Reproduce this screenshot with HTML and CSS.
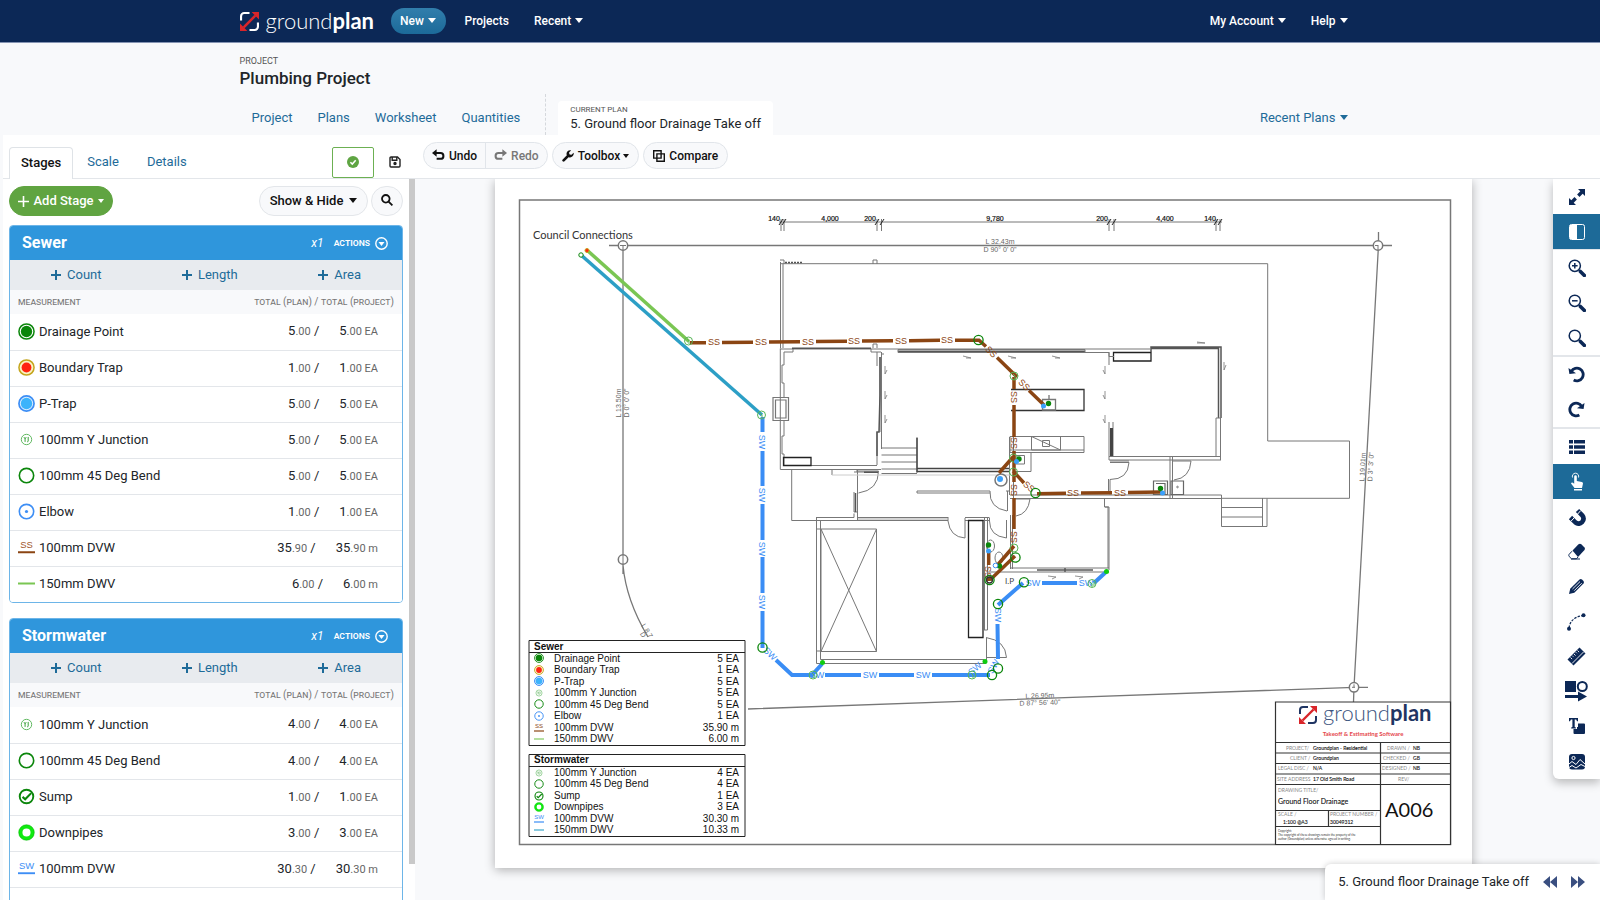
FILE: index.html
```html
<!DOCTYPE html>
<html lang="en">
<head>
<meta charset="utf-8">
<title>Plumbing Project - groundplan</title>
<link rel="stylesheet" href="styles.css">
</head>
<body>
<svg class="defs" width="0" height="0" aria-hidden="true">
  <symbol id="logo" viewBox="0 0 18 18">
    <path d="M1 8V4a3 3 0 0 1 3-3h5M17 10v4a3 3 0 0 1-3 3H9" fill="none" stroke="currentColor" stroke-width="2"/>
    <path d="M3.5 14.5l11-11" stroke="#d9252a" stroke-width="2.4"/>
    <path d="M11 0h7v7zM0 11v7h7z" fill="#d9252a"/>
  </symbol>
  <symbol id="m-drain" viewBox="0 0 18 18"><circle cx="9" cy="9" r="8" fill="#fff" stroke="#0b860b" stroke-width="1.6"/><circle cx="9" cy="9" r="6" fill="#0b860b"/></symbol>
  <symbol id="m-trap" viewBox="0 0 18 18"><circle cx="9" cy="9" r="8" fill="#fbf3c4" stroke="#c4a51c" stroke-width="1.6"/><circle cx="9" cy="9" r="5.2" fill="#f21"/></symbol>
  <symbol id="m-ptrap" viewBox="0 0 18 18"><circle cx="9" cy="9" r="8" fill="#d5ecff" stroke="#3d8ef5" stroke-width="1.8"/><circle cx="9" cy="9" r="6" fill="#3cb3fb"/></symbol>
  <symbol id="m-yj" viewBox="0 0 18 18"><circle cx="9" cy="9" r="5.5" fill="#fff" stroke="#58b558" stroke-width="1"/><path d="M6.3 6.5l1.2 1.8 1.2-1.8M7.5 8.3v3.2M10.8 6.3v4.2q0 1-1 1" fill="none" stroke="#2f9c2f" stroke-width="1"/></symbol>
  <symbol id="m-bend" viewBox="0 0 18 18"><circle cx="9" cy="9" r="7.6" fill="#fff" stroke="#0b860b" stroke-width="1.7"/></symbol>
  <symbol id="m-elbow" viewBox="0 0 18 18"><circle cx="9" cy="9" r="7.6" fill="#fff" stroke="#3d8ef5" stroke-width="1.7"/><circle cx="9" cy="9" r="1.7" fill="#3d8ef5"/></symbol>
  <symbol id="m-sump" viewBox="0 0 18 18"><circle cx="9" cy="9" r="7.2" fill="#fff" stroke="#0b860b" stroke-width="2"/><path d="M4.8 9.4l2.8 2.6 6.4-6.6" fill="none" stroke="#0b860b" stroke-width="2.2"/></symbol>
  <symbol id="m-down" viewBox="0 0 18 18"><circle cx="9" cy="9" r="6.3" fill="#fff" stroke="#10ea10" stroke-width="4"/><circle cx="9" cy="9" r="8.2" fill="none" stroke="#0bb80b" stroke-width=".6"/></symbol>
  <symbol id="m-green" viewBox="0 0 18 18"><path d="M0 9h18" stroke="#7ac653" stroke-width="2"/></symbol>
  <symbol id="m-teal" viewBox="0 0 18 18"><path d="M0 9h18" stroke="#2c9fc6" stroke-width="2"/></symbol>
  <symbol id="undo" viewBox="0 0 18 18"><path d="M3.6 5.6A6.7 6.7 0 1 1 6 14.8" fill="none" stroke="currentColor" stroke-width="3"/><path d="M.5 2l1 6.6 7-.8z" fill="currentColor"/></symbol>
  <symbol id="back" viewBox="0 0 14 14"><path d="M4 4.4h5.2a3 3 0 0 1 0 6.2H5" fill="none" stroke="currentColor" stroke-width="2.2"/><path d="M0 4.4L5 .4v8z" fill="currentColor"/></symbol>
  <symbol id="glass" viewBox="0 0 18 18"><circle cx="6.8" cy="6.8" r="5.6" fill="none" stroke="currentColor" stroke-width="1.5"/><path d="M11 11l1.6 1.6" stroke="currentColor" stroke-width="1.5"/><path d="M12.4 12.4l4 4" stroke="currentColor" stroke-width="3.6" stroke-linecap="round"/></symbol>
  <symbol id="ff" viewBox="0 0 14 12"><path d="M0 0l7 6-7 6zM7 0l7 6-7 6z" fill="currentColor"/></symbol>
</svg>

<header class="topbar">
  <div class="wrap">
    <a class="brand" href="#" aria-label="groundplan"><svg width="19" height="19"><use href="#logo"/></svg><span>ground<b>plan</b></span></a>
    <button class="new">New<i class="caret"></i></button>
    <a class="toplink" href="#">Projects</a>
    <a class="toplink" href="#">Recent<i class="caret"></i></a>
    <a class="toplink push" href="#">My Account<i class="caret"></i></a>
    <a class="toplink last" href="#">Help<i class="caret"></i></a>
  </div>
</header>

<section class="project">
  <div class="wrap-col">
    <p class="eyebrow">PROJECT</p>
    <h1>Plumbing Project</h1>
    <nav class="subnav">
      <a href="#">Project</a><a href="#">Plans</a><a href="#">Worksheet</a><a href="#">Quantities</a>
      <div class="divider"></div>
      <div class="current"><small>CURRENT PLAN</small><span>5. Ground floor Drainage Take off</span></div>
      <a class="recent" href="#">Recent Plans<i class="caret"></i></a>
    </nav>
  </div>
</section>

<div class="bar">
  <div class="tabs">
    <button class="tab on">Stages</button>
    <button class="tab">Scale</button>
    <button class="tab">Details</button>
    <button class="ok" aria-label="Saved"><svg width="12" height="12" viewBox="0 0 12 12"><circle cx="6" cy="6" r="6" fill="#5fa543"/><path d="M3.4 6.2l1.9 1.9 3.4-3.8" fill="none" stroke="#fff" stroke-width="1.5"/></svg></button>
    <button class="save" aria-label="Save"><svg width="12" height="12" viewBox="0 0 12 12" fill="none" stroke="#222" stroke-width="1.4"><path d="M1 2a1 1 0 0 1 1-1h6.500L11 3.500V10a1 1 0 0 1-1 1H2a1 1 0 0 1-1-1z"/><path d="M3.200 1v3.200h4.600V1"/><circle cx="6" cy="7.500" r="1" fill="#222"/></svg></button>
  </div>
  <div class="tools">
    <div class="group">
      <button><svg width="13" height="13"><use href="#back"/></svg>Undo</button>
      <button class="off"><svg width="13" height="13" class="flip"><use href="#back"/></svg>Redo</button>
    </div>
    <button class="pill"><svg width="12" height="12" viewBox="0 0 12 12"><path d="M1.600 10.400L6.500 5.500" stroke="#111" stroke-width="2.600" stroke-linecap="round"/><path d="M11.600 2.700L9.500 4.800 7.400 4.400 7.100 2.400 9.200.300A3.700 3.700 0 0 0 4.700 5l2.200 2.200a3.700 3.700 0 0 0 4.700-4.500z" fill="#111"/></svg>Toolbox<i class="caret sm"></i></button>
    <button class="pill"><svg width="12" height="12" viewBox="0 0 12 12" fill="none" stroke="#111" stroke-width="1.400"><path d="M.700.700h7.400v7.400H.700zM3.900 3.900h7.400v7.400H3.900z"/></svg>Compare</button>
  </div>
</div>

<main class="work">
  <aside class="side">
    <div class="stages">
      <div class="controls">
        <button class="add"><svg width="11" height="11" viewBox="0 0 11 11"><path d="M5.500 0v11M0 5.500h11" stroke="#fff" stroke-width="1.600"/></svg>Add Stage<i class="caret sm"></i></button>
        <button class="show">Show &amp; Hide<i class="caret"></i></button>
        <button class="find" aria-label="Search"><svg width="12" height="12" viewBox="0 0 12 12" fill="none" stroke="#111" stroke-width="1.800"><circle cx="4.800" cy="4.800" r="3.800"/><path d="M7.600 7.600l3.800 3.800"/></svg></button>
      </div>

      <section class="panel">
        <header><h2>Sewer</h2><em>x1</em><button>actions<svg width="13" height="13" viewBox="0 0 13 13"><circle cx="6.500" cy="6.500" r="5.700" fill="none" stroke="#fff" stroke-width="1.400"/><path d="M3.500 5h6l-3 4z" fill="#fff"/></svg></button></header>
        <div class="adders"><button><i class="plus"></i>Count</button><button><i class="plus"></i>Length</button><button><i class="plus"></i>Area</button></div>
        <table>
          <thead><tr><th>measurement</th><th>total (plan) / total (project)</th></tr></thead>
          <tbody>
            <tr><td><svg><use href="#m-drain"/></svg>Drainage Point</td><td>5<s>.00</s> /<b>5<s>.00 EA</s></b></td></tr>
            <tr><td><svg><use href="#m-trap"/></svg>Boundary Trap</td><td>1<s>.00</s> /<b>1<s>.00 EA</s></b></td></tr>
            <tr><td><svg><use href="#m-ptrap"/></svg>P-Trap</td><td>5<s>.00</s> /<b>5<s>.00 EA</s></b></td></tr>
            <tr><td><svg><use href="#m-yj"/></svg>100mm Y Junction</td><td>5<s>.00</s> /<b>5<s>.00 EA</s></b></td></tr>
            <tr><td><svg><use href="#m-bend"/></svg>100mm 45 Deg Bend</td><td>5<s>.00</s> /<b>5<s>.00 EA</s></b></td></tr>
            <tr><td><svg><use href="#m-elbow"/></svg>Elbow</td><td>1<s>.00</s> /<b>1<s>.00 EA</s></b></td></tr>
            <tr><td><svg viewBox="0 0 18 18"><text x="9" y="9" font-size="10" text-anchor="middle" fill="#a0562a" class="arial">SS</text><path d="M0 14h18" stroke="#8b4513" stroke-width="2"/></svg>100mm DVW</td><td>35<s>.90</s> /<b>35<s>.90 m</s></b></td></tr>
            <tr><td><svg><use href="#m-green"/></svg>150mm DWV</td><td>6<s>.00</s> /<b>6<s>.00 m</s></b></td></tr>
          </tbody>
        </table>
      </section>

      <section class="panel">
        <header><h2>Stormwater</h2><em>x1</em><button>actions<svg width="13" height="13" viewBox="0 0 13 13"><circle cx="6.500" cy="6.500" r="5.700" fill="none" stroke="#fff" stroke-width="1.400"/><path d="M3.500 5h6l-3 4z" fill="#fff"/></svg></button></header>
        <div class="adders"><button><i class="plus"></i>Count</button><button><i class="plus"></i>Length</button><button><i class="plus"></i>Area</button></div>
        <table>
          <thead><tr><th>measurement</th><th>total (plan) / total (project)</th></tr></thead>
          <tbody>
            <tr><td><svg><use href="#m-yj"/></svg>100mm Y Junction</td><td>4<s>.00</s> /<b>4<s>.00 EA</s></b></td></tr>
            <tr><td><svg><use href="#m-bend"/></svg>100mm 45 Deg Bend</td><td>4<s>.00</s> /<b>4<s>.00 EA</s></b></td></tr>
            <tr><td><svg><use href="#m-sump"/></svg>Sump</td><td>1<s>.00</s> /<b>1<s>.00 EA</s></b></td></tr>
            <tr><td><svg><use href="#m-down"/></svg>Downpipes</td><td>3<s>.00</s> /<b>3<s>.00 EA</s></b></td></tr>
            <tr><td><svg viewBox="0 0 18 18"><text x="9" y="9" font-size="10" text-anchor="middle" fill="#3d8ef5" class="arial">SW</text><path d="M0 14h18" stroke="#3d8ef5" stroke-width="2"/></svg>100mm DVW</td><td>30<s>.30</s> /<b>30<s>.30 m</s></b></td></tr>
            <tr><td></td><td></td></tr>
          </tbody>
        </table>
      </section>
    </div>
    <div class="thumb"></div>
  </aside>

  <div class="canvas">
    <svg class="sheet" viewBox="495 179 977 689" role="img" aria-label="Ground floor drainage plan">
      <rect x="519.500" y="200" width="931" height="644.500" fill="none" stroke="#777" stroke-width="1.500"/>

      <!-- dimension string -->
      <g stroke="#777" stroke-width="1" fill="none">
        <path d="M779 222H1222M781 219v12M784 219v12M877 219v12M881.500 219v12M1109 219v12M1114 219v12M1216 219v12M1220 219v12"/>
        <path stroke="#222" d="M779 225l4-6M782 225l4-6M875 225l4-6M880 225l4-6M1107 225l4-6M1112 225l4-6M1214 225l4-6M1218 225l4-6"/>
      </g>
      <g class="arial" font-size="7" fill="#111" stroke="#111" stroke-width=".2" text-anchor="middle">
        <text x="774" y="221">140</text><text x="830" y="221">4,000</text><text x="870" y="221">200</text><text x="995" y="221">9,780</text><text x="1102" y="221">200</text><text x="1165" y="221">4,400</text><text x="1210" y="221">140</text>
      </g>

      <!-- boundary -->
      <g stroke="#777" stroke-width="1.300" fill="none">
        <path d="M609 245.500H1392M623 245V574M623 565Q626 600 648 637M1378.500 232v13L1354 687l-.500 15M748 709L1354 687.300H1368"/>
        <g fill="#fff" stroke-width="1.500"><circle cx="623" cy="245.500" r="4.700"/><circle cx="1378" cy="245.500" r="4.700"/><circle cx="623" cy="559.500" r="4.700"/><circle cx="1354" cy="687.300" r="4.700"/></g>
        <path stroke-width="1" d="M623 245v5M1378 245v5M620 245.500h6M1375 245.500h3M623 555v9M1354 687.300v-3M1352 687.300h3"/>
      </g>
      <g class="arial" font-size="7" fill="#666" text-anchor="middle">
        <text x="1000" y="244">L 32.43m</text><text x="1000" y="252">D 90° 0' 0"</text>
        <text transform="translate(621 403) rotate(-90)">L 13.50m</text><text transform="translate(629 403) rotate(-90)">D 0° 0' 0"</text>
        <text transform="translate(1365 467) rotate(-87)">L 19.01m</text><text transform="translate(1373 467) rotate(-87)">D 3° 3' 0"</text>
        <text transform="translate(1040 698) rotate(-2)">L 26.95m</text><text transform="translate(1040 705) rotate(-2)">D 87° 56' 40"</text>
        <text transform="translate(645 632) rotate(58)">L 8.7</text><text transform="translate(641 636) rotate(58)">D</text>
      </g>
      <text class="lato" x="533" y="239" font-size="11" fill="#333">Council Connections</text>

      <!-- walls -->
      <g stroke="#777" stroke-width="1" fill="none">
        <path d="M780.500 262V348M783 264V348M780 263.700H1267.700V441H1349.500V498.300H1221M780 260h4v4M873 264v-4h4v4M873 348v-4h4v4"/>
        <path stroke="#555" d="M785 262.500h17" stroke-width="1.500" stroke-dasharray="2 1"/>
        <path d="M780.300 348.500V469.500H881M784 352V365h-2v18h2v14M784 420v16h-2v18h2v12M784 352h9M780 349H1150M793 352v-3M871 349v3h10M877 352v14M880 357v75M784 465.500H877M877 432v33M881.500 352v97"/>
        <path stroke="#555" stroke-width="1.500" d="M792 348.300H871M880 357v38l-1 37h-2v24M898 351.200H1085"/>
        <path d="M773 397.500h15.500V420.500H773zM775.500 400h10.500v18H775.500z" stroke-width="1.200"/>
        <path stroke="#222" stroke-width="1.300" d="M783.500 457.500H811V465.500H783.500zM1113.500 352.500H1151V361H1113.500z"/>
        <path d="M898 349.500H1085v3H898zM881 354h3M1085 352.500h24v4h5M1109 352v13"/>
        <path stroke="#555" stroke-width="1.500" d="M1151 352v-5H1221V418M1151 348.500H1218.500V418"/>
        <path d="M1216 418h5M1216 418v39M1220.500 418V460M1109 456.500H1220M1109 460H1221M1109 422v38M1113 422v35M1170 457V498M1172.500 457V498"/>
        <path stroke="#444" stroke-width="3" d="M1111.500 428V456"/>
        <path d="M881.500 448H917M881.500 455H917M881.500 462H917M881.500 469H917M881.500 473.500H917M917 438V473"/>
        <path stroke="#444" stroke-width="1.400" d="M917 437.500V471.500H1010M917 468.500H1010"/>
        <path stroke="#333" stroke-width="1.300" d="M1011 389.500H1084V410.500H1011"/>
        <path d="M1042.500 399.500H1055.500V410H1042.500zM1049 395v5" stroke-width="1.300"/>
        <path d="M1010 436.500H1084V452.500H1010zM1010 450H1084M1031.500 436.500V450H1060.500V436.500M1031.500 436.500L1060.500 450M1042.500 440.500h7v6h-7zM1031 452.500V471.500H1013M1016 455.500H1024.500V464H1016z"/>
        <path d="M1009.500 437V495M1013.500 437V520M1010 495H1221.500M1010 498.500H1221M1221.500 495V526.500H1267V498.500M1262.500 498V526M1221 507.500h41M1221 517h41"/>
        <path d="M917 491H990M917 493H990M917 491v2M990 491q-1 17 17 20M1007.500 491v20M1006 491h4"/>
        <path d="M1110 461h19M1110 462.500h19q-1 17-19 17v15M1108.500 479v15M1172 461h19q-1 17-17 19"/>
        <path stroke="#666" stroke-width="1.200" d="M1153.500 481H1167.500V494.500H1153.500zM1156 483.500h9v11M1171 481H1183.500V494.500H1171z"/>
        <circle cx="1177.500" cy="487" r=".8"/>
        <path d="M1013 499h17q-2 15-14 17M1104.500 498v9h4M1105 507h4V570M1108 507V568M1010.500 515V569M1012.500 515V569M1010 568H1109M987 572H1109"/>
        <path stroke="#555" stroke-width="1.400" d="M1037 570H1093M1065 568v4"/>
        <path d="M791.700 469V520.500H817M832 469.500V475M817 517.500H854v-4M857.500 470V520M854 492v20h3.500M857 517.500H948M857 520.500H948M965 517.500h24.500M965 520.500h24.500M854 472h24.500M856 471h22.500q0 19-20 22M948 517v4q2 16 17 17v-20M989.500 518v3q0 15 17 17v-18"/>
        <path stroke="#ccc" d="M832 475H1010"/>
        <path stroke="#555" stroke-width="1.500" d="M864 472.300h14M855.500 493v19"/>
        <path stroke="#aaa" d="M858 519H948"/>
        <path d="M816.500 517V663.500H986M820.500 520V659.500H984M858 520.500H817M816 529h5M816 651h5"/>
        <path d="M821 529H876.500V651.500H821zM821 529L876.500 651.500M876.500 529L821 651.500" />
        <path stroke="#222" stroke-width="1.300" d="M968.500 520.500H983V637.500H968.500z"/>
        <path d="M984.500 518V630M987.500 518V630h-4M986.500 638V663M986 657.500h20.500q-1-17-20.500-20"/>
        <ellipse cx="990.500" cy="546" rx="4" ry="6"/><ellipse cx="999" cy="558" rx="4" ry="6"/>
        <circle cx="1001" cy="480" r="6" fill="#fff" stroke-width="1.500"/>
        <path d="M1048 576l8 1-4 2M1075 576l8 1-4 2M963 356l8 2h-5M1008 356l8 2h-5M1052 356l8 2h-5M1197 342l8 1h-8M885 366v8l2-4M885 391v8l2-4M885 415v8l2-4M1105 366v8l-2-4M1105 391v8l-2-4M1105 415v8l-2-4M1224 362v8l2-5" stroke-width=".8"/>
      </g>
      <text class="lato" x="1005" y="584" font-size="8" fill="#444">I.P</text>

      <!-- pipes -->
      <g fill="none" stroke-width="3.500">
        <path stroke="#7ac653" d="M588 251L689 341.500"/>
        <path stroke="#2c9fc6" d="M581 255L762 415"/>
        <path stroke="#8b4513" d="M690 342.700H706M722 342.500L753 342.200M769 342L800 341.700M816 341.500L847 341.200M862 341L893 340.800M909 340.700L940 340.300M955 340.200H979L986 346.500M997 357.500L1017 377M1029 390.500L1044 405M1014 377V389M1014 405V437M1014 451V482M1014 498V529M1013 457L999 473M1013 471L1024 483M1037 493.700L1066 493.300M1081 493L1112 492.700M1128 492.500L1161 492M1014 546L998 564.500M1015 556L990 580M988.700 552V565M988.700 577v4"/>
        <path stroke="#3a8df5" stroke-width="4" d="M762.500 417V432M762.500 451V486M762.500 504V540M762.500 557V593M762.500 611V648M776 660L792 675H812L822 664M825 675H861M879 675H914M932 675H990M998 659L997.500 624M998 605L1023 583M1042 583H1077M1094 583L1106 572"/>
      </g>
      <g class="arial" font-size="9" fill="#8b4513" text-anchor="middle">
        <text x="714" y="345">SS</text><text x="761" y="345">SS</text><text x="808" y="345">SS</text><text x="854" y="344">SS</text><text x="901" y="344">SS</text><text x="947" y="343">SS</text>
        <text transform="translate(989 354) rotate(45)">SS</text><text transform="translate(1022 387) rotate(45)">SS</text><text transform="translate(1027 489) rotate(40)">SS</text>
        <text transform="translate(1011 397) rotate(90)">SS</text><text transform="translate(1011 443) rotate(90)">SS</text><text transform="translate(1011 490) rotate(90)">SS</text><text transform="translate(1011 537) rotate(90)">SS</text><text transform="translate(985 572) rotate(90)">SS</text>
        <text x="1073" y="496">SS</text><text x="1120" y="496">SS</text>
      </g>
      <g class="arial" font-size="9" fill="#3a8df5" text-anchor="middle">
        <text transform="translate(759 442) rotate(90)">SW</text><text transform="translate(759 495) rotate(90)">SW</text><text transform="translate(759 549) rotate(90)">SW</text><text transform="translate(759 602) rotate(90)">SW</text>
        <text transform="translate(768 656) rotate(43)">SW</text><text x="817" y="678">SW</text><text x="870" y="678">SW</text><text x="923" y="678">SW</text>
        <text transform="translate(977 671) rotate(-42)">SW</text><text transform="translate(996 668) rotate(-60)">SW</text><text transform="translate(995 615) rotate(90)">SW</text>
        <text x="1033" y="586">SW</text><text x="1086" y="586">SW</text>
      </g>
      <g fill="none" stroke="#0b860b" stroke-width="1.300">
        <circle cx="978.500" cy="340" r="4.600"/><circle cx="1035.500" cy="493" r="4.600"/><circle cx="1015.500" cy="557.500" r="4.600"/><circle cx="989.500" cy="580" r="4.600"/><circle cx="762.500" cy="647.500" r="4.600"/><circle cx="992" cy="675" r="4.600"/><circle cx="998" cy="668.500" r="4.600"/><circle cx="998" cy="604" r="4.600"/><circle cx="1024" cy="582.300" r="4.600"/>
        <circle cx="989.500" cy="580" r="3" stroke="#333"/>
      </g>
      <g fill="none" stroke="#58b558" stroke-width="1">
        <circle cx="688.500" cy="341" r="4"/><circle cx="761.500" cy="415" r="4"/><circle cx="1014" cy="376" r="4"/><circle cx="1013.500" cy="458" r="4"/><circle cx="1013.500" cy="472" r="4"/><circle cx="1014" cy="548" r="4"/><circle cx="813" cy="675" r="4"/><circle cx="972" cy="675" r="4"/><circle cx="1092" cy="583.500" r="4"/>
        <path d="M687 339l2 2v3M760 413l2 2v3M1013 374l2 2v3M812 673l2 2v3M971 673l2 2v3M1090 582l2 2v3M1094 582v4"/>
      </g>
      <g fill="#10cc10"><circle cx="822.500" cy="662.500" r="2.500"/><circle cx="985" cy="661.500" r="2.500"/><circle cx="1106.500" cy="571.500" r="2.500"/></g>
      <g fill="#0b860b"><circle cx="1048.500" cy="403.500" r="2.700"/><circle cx="1019" cy="459" r="2.700"/><circle cx="1160.500" cy="488.500" r="2.700"/><circle cx="988.500" cy="545" r="2.700"/><circle cx="999.500" cy="566" r="2.700"/></g>
      <g fill="#3aa0fb"><circle cx="1043.500" cy="406" r="2.500"/><circle cx="1016.500" cy="461.500" r="2.500"/><circle cx="1162.500" cy="493" r="2.500"/><circle cx="988.500" cy="551" r="2.500"/><circle cx="1000" cy="479" r="3"/></g>
      <circle cx="995.500" cy="565.500" r="2.300" fill="#fff" stroke="#3d8ef5"/>
      <circle cx="581" cy="255" r="2.200" fill="#fff" stroke="#0b860b"/><circle cx="587" cy="250.500" r="2" fill="#f21" stroke="#c4a51c"/>

      <!-- legends -->
      <g fill="#fff" stroke="#222" stroke-width="1"><path d="M529 640.500H745V745.500H529zM529 652.500H745M529 754.500H745V836.500H529zM529 766.500H745"/></g>
      <g class="arial" font-size="10" fill="#111">
        <text x="534" y="650" font-weight="bold">Sewer</text>
        <text x="554" y="662">Drainage Point</text><text x="554" y="673">Boundary Trap</text><text x="554" y="685">P-Trap</text><text x="554" y="696">100mm Y Junction</text><text x="554" y="708">100mm 45 Deg Bend</text><text x="554" y="719">Elbow</text><text x="554" y="731">100mm DVW</text><text x="554" y="742">150mm DWV</text>
        <text x="534" y="763" font-weight="bold">Stormwater</text>
        <text x="554" y="776">100mm Y Junction</text><text x="554" y="787">100mm 45 Deg Bend</text><text x="554" y="799">Sump</text><text x="554" y="810">Downpipes</text><text x="554" y="822">100mm DVW</text><text x="554" y="833">150mm DWV</text>
        <g text-anchor="end">
          <text x="739" y="662">5 EA</text><text x="739" y="673">1 EA</text><text x="739" y="685">5 EA</text><text x="739" y="696">5 EA</text><text x="739" y="708">5 EA</text><text x="739" y="719">1 EA</text><text x="739" y="731">35.90 m</text><text x="739" y="742">6.00 m</text>
          <text x="739" y="776">4 EA</text><text x="739" y="787">4 EA</text><text x="739" y="799">1 EA</text><text x="739" y="810">3 EA</text><text x="739" y="822">30.30 m</text><text x="739" y="833">10.33 m</text>
        </g>
      </g>
      <g class="arial" font-size="6" text-anchor="middle">
        <text x="539" y="728" fill="#8b4513">SS</text><text x="539" y="819" fill="#3a8df5">SW</text>
      </g>
      <path d="M534 731h10" stroke="#8b4513" stroke-width="1.200"/><path d="M534 822h10" stroke="#3a8df5" stroke-width="1.200"/>
      <use href="#m-drain" x="534" y="653" width="10" height="10"/><use href="#m-trap" x="534" y="665" width="10" height="10"/><use href="#m-ptrap" x="534" y="676" width="10" height="10"/><use href="#m-yj" x="534" y="688" width="10" height="10"/><use href="#m-bend" x="534" y="699" width="10" height="10"/><use href="#m-elbow" x="534" y="711" width="10" height="10"/><use href="#m-green" x="534" y="734" width="10" height="10"/>
      <use href="#m-yj" x="534" y="768" width="10" height="10"/><use href="#m-bend" x="534" y="779" width="10" height="10"/><use href="#m-sump" x="534" y="791" width="10" height="10"/><use href="#m-down" x="534" y="802" width="10" height="10"/><use href="#m-teal" x="534" y="825" width="10" height="10"/>

      <!-- title block -->
      <path fill="#fff" stroke="#333" stroke-width="1.200" d="M1275.500 702H1450.500V844.500H1275.500zM1275.500 742.500H1450M1275.500 753H1450M1275.500 763.500H1450M1275.500 774H1450M1275.500 784.500H1450M1380.500 742.500V844.500M1275.500 810.500H1380.500M1275.500 826.500H1380.500M1328.500 810.500V826.500"/>
      <g color="#1f3563"><use href="#logo" x="1299" y="706" width="18" height="18"/></g>
      <text class="lato" x="1323" y="721" font-size="22" fill="#3d5580" font-weight="300">ground<tspan font-weight="700" fill="#1f3563">plan</tspan></text>
      <text class="lato" x="1363" y="736" font-size="6" fill="#e5484d" font-weight="700" text-anchor="middle">Takeoff &amp; Estimating Software</text>
      <g class="lato" font-size="5" fill="#888">
        <text x="1286" y="750">PROJECT/</text><text x="1290" y="760">CLIENT /</text><text x="1278" y="770">LEGAL DISC /</text><text x="1277" y="781">SITE ADDRESS</text><text x="1387" y="750">DRAWN /</text><text x="1383" y="760">CHECKED /</text><text x="1382" y="770">DESIGNED /</text><text x="1398" y="781">REV/</text><text x="1278" y="792">DRAWING TITLE/</text><text x="1278" y="816">SCALE /</text><text x="1330" y="816">PROJECT NUMBER /</text>
      </g>
      <g class="lato" font-size="5" fill="#111" stroke="#111" stroke-width=".1">
        <text x="1313" y="750">Groundplan - Residential</text><text x="1313" y="760">Groundplan</text><text x="1313" y="770">N/A</text><text x="1313" y="781">17 Old Smith Road</text><text x="1413" y="750">NB</text><text x="1413" y="760">GB</text><text x="1413" y="770">NB</text><text x="1283" y="824">1:100 @A3</text><text x="1330" y="824">30049312</text>
        <text x="1278" y="804" font-size="7">Ground Floor Drainage</text>
      </g>
      <g class="lato" font-size="3" fill="#333"><text x="1278" y="832">Copyright:</text><text x="1278" y="836">The copyright of these drawings remain the property of the</text><text x="1278" y="840">author (Groundplan) unless otherwise agreed in writing.</text></g>
      <text class="lato" x="1385" y="817" font-size="20" fill="#111">A006</text>
    </svg>

    <div class="rail">
      <button aria-label="Fit"><svg width="18" height="18" viewBox="0 0 18 18" fill="currentColor"><path d="M10 1h7v7l-2.300-2.300-3.200 3.200-2.400-2.400 3.200-3.200zM8 17H1v-7l2.300 2.300 3.200-3.200 2.400 2.400-3.200 3.200z"/></svg></button>
      <button class="on" aria-label="Split"><svg width="16" height="16" viewBox="0 0 16 16"><rect x=".5" y=".5" width="15" height="15" rx="2" fill="none" stroke="#fff"/><path d="M1 1h7v14H1z" fill="#fff"/></svg></button>
      <hr>
      <button aria-label="Zoom in"><svg width="18" height="18"><use href="#glass"/><path d="M4 6.800h5.600M6.800 4v5.600" stroke="currentColor" stroke-width="1.500"/></svg></button>
      <button aria-label="Zoom out"><svg width="18" height="18"><use href="#glass"/><path d="M4 6.800h5.600" stroke="currentColor" stroke-width="1.500"/></svg></button>
      <button aria-label="Zoom"><svg width="18" height="18"><use href="#glass"/></svg></button>
      <hr class="thick">
      <button aria-label="Rotate left"><svg width="17" height="17"><use href="#undo"/></svg></button>
      <button aria-label="Rotate right"><svg width="17" height="17" class="flip"><use href="#undo"/></svg></button>
      <hr class="thick">
      <button aria-label="List"><svg width="16" height="14" viewBox="0 0 16 14" fill="currentColor"><path d="M0 0h4v3.600H0zM5 0h11v3.600H5zM0 5.200h4v3.600H0zM5 5.200h11v3.600H5zM0 10.400h4V14H0zM5 10.400h11V14H5z"/></svg></button>
      <button class="on" aria-label="Select"><svg width="14" height="19" viewBox="0 0 14 19" fill="#fff"><path d="M4.200 4.500a1.300 1.300 0 0 1 2.600 0V9l5 1q1.200.300 1.200 1.500L12 16H4.500L1 11.500q.500-1.300 1.800-.800l1.400 1zM4 17h8v1.500H4z"/><path d="M2.500 5.500a3.200 3.200 0 1 1 6 0" fill="none" stroke="#fff" stroke-width=".9"/></svg></button>
      <button aria-label="Snap"><svg width="18" height="18" viewBox="0 0 18 18"><path d="M2.500 9.500l4.800 4.800q3.700 2.800 6.700-.200 3-3.300.200-6.800L9.500 2.500" fill="none" stroke="currentColor" stroke-width="4.600"/><path d="M3 13.200l4.200-4.500M8.600 7.200l4-4.500" stroke="#fff" stroke-width="1"/></svg></button>
      <button aria-label="Erase"><svg width="18" height="17" viewBox="0 0 18 17"><path d="M10.500 1.200Q12 .200 13.300 1.200L16.500 4.500q1 1.300 0 2.500L10 14 4.500 7.500z" fill="currentColor"/><path d="M4 8.200L1 11.500q-.500 1 .200 2l2.300 2.300h5L10 14M3 16H12" fill="none" stroke="currentColor" stroke-width="1"/></svg></button>
      <button aria-label="Draw"><svg width="17" height="17" viewBox="0 0 17 17"><path d="M1 16l1.200-5.300L11.500 1.500q1.200-1 2.500 0L15.500 3q1 1.300 0 2.500L6.300 14.800z" fill="currentColor"/><path d="M4.500 11L12 3.600M6.200 12.700l7.500-7.500" stroke="#fff" stroke-width=".9"/></svg></button>
      <button aria-label="Curve"><svg width="19" height="18" viewBox="0 0 19 18"><path d="M2 15Q3.500 4 16.500 2.500" fill="none" stroke="currentColor" stroke-width="1.200" stroke-dasharray="2.500 1.200"/><circle cx="2" cy="15.700" r="2" fill="currentColor"/><circle cx="16.500" cy="2.300" r="2" fill="currentColor"/></svg></button>
      <button aria-label="Ruler"><svg width="19" height="19" viewBox="0 0 19 19"><path d="M12.500.500l6 6-12 12-6-6z" fill="currentColor"/><path d="M3.500 10.500l1.600 1.600M5.300 8.700l1 1M7 7l1.600 1.600M8.800 5.200l1 1M10.500 3.500l1.600 1.600M5 16.500L16.500 5" stroke="#fff" stroke-width=".9"/></svg></button>
      <button aria-label="Shapes"><svg width="23" height="21" viewBox="0 0 23 21"><path d="M0 0h11v11H0zM0 14h13v-3.500l9 5L13 20.500V17H0z" fill="currentColor"/><circle cx="17.300" cy="5.500" r="4.500" fill="#fff" stroke="currentColor" stroke-width="2"/></svg></button>
      <button aria-label="Text"><svg width="16" height="17" viewBox="0 0 16 17"><path d="M9 5.500h6q1 0 1 1V15q0 1-1 1H5.500q-1 0-1-1v-4H8V9h1z" fill="currentColor"/><path d="M0 0h9v3.200H8L7.200 1.500H5.700V9l1.200.600v.900H2.200v-.900L3.400 9V1.500H1.900L1 3.200H0z" fill="currentColor"/></svg></button>
      <button aria-label="Image"><svg width="16" height="16" viewBox="0 0 16 16"><rect width="16" height="15.500" rx="3" fill="currentColor"/><circle cx="4.500" cy="4" r="1.600" fill="none" stroke="#fff"/><path d="M0 10l3-2.500 4 3 4-5 5 4.500M0 13.500l3-2 4 2.500 5-3.500 4 2" fill="none" stroke="#fff" stroke-width="1"/></svg></button>
    </div>

    <div class="pager"><span>5. Ground floor Drainage Take off</span><button aria-label="Previous plan"><svg class="flip" width="14" height="12"><use href="#ff"/></svg></button><button aria-label="Next plan"><svg width="14" height="12"><use href="#ff"/></svg></button></div>
  </div>
</main>
</body>
</html>
```
FILE: styles.css
```css
* { box-sizing: border-box; }
html, body { height: 100%; }
body {
  margin: 0;
  display: flex;
  flex-direction: column;
  overflow: hidden;
  background: #f8f9fb;
  color: #212529;
  font: 13px/20px Roboto, sans-serif;
}
button { font: inherit; color: inherit; background: none; border: 0; padding: 0; cursor: pointer; }
a { color: #1e6b99; text-decoration: none; }
h1, h2, p { margin: 0; }
svg { flex: none; }
.defs { position: absolute; }
.flip { transform: scaleX(-1); }
.arial { font-family: "Liberation Sans", Arial, sans-serif; }
.lato { font-family: Lato, sans-serif; }
.caret {
  display: inline-block;
  margin-left: 4px;
  vertical-align: 2px;
  border: 4px solid transparent;
  border-top: 5px solid currentColor;
  border-bottom: 0;
}
.caret.sm { border-width: 4px 3px 0; }

.topbar { flex: none; height: 43px; background: #0c2856; border-bottom: 1px solid #8594b3; padding-right: 13px; }
.wrap { max-width: 1108px; height: 42px; margin: 0 auto; display: flex; align-items: center; }
.brand { display: flex; align-items: center; gap: 7px; width: 151px; color: #fff; font: 300 22px/26px Lato, sans-serif; }
.brand b { font-weight: 700; }
.new { width: 55px; height: 26px; border-radius: 13px; color: #fff; font-weight: 500; font-size: 12px; background: linear-gradient(#317eac, #1c6a99); margin-right: 19px; }
.toplink { color: #fff; font-weight: 500; font-size: 12px; margin-right: 25px; }
.push { margin-left: auto; }
.last { margin-right: 0; }

.project { flex: none; background: #f8f9fb; padding-right: 13px; }
.wrap-col { max-width: 1108px; margin: 0 auto; padding-top: 11px; }
.eyebrow { font-size: 9px; line-height: 14px; color: #555; }
h1 { font-size: 17px; line-height: 20px; font-weight: 500; }
.subnav { display: flex; height: 47px; padding-left: 12px; gap: 25px; align-items: stretch; }
.subnav a { padding-top: 20px; }
.divider { border-left: 1px dashed #d5d8dc; margin-top: 6px; }
.current { display: flex; flex-direction: column; margin: 13px 0 0 -13px; padding: 3px 12px 0; background: #fff; border-radius: 4px 4px 0 0; line-height: 15px; }
.current small { font-size: 8px; line-height: 12px; color: #555; }
.recent { margin-left: auto; }

.bar { flex: none; display: flex; height: 44px; margin-left: 3px; background: #fff; border-bottom: 1px solid #e3e6ea; }
.tabs { display: flex; width: 412px; padding: 12px 14px 0 6px; }
.tab { padding: 0 14px 2px; color: #1e6b99; }
.tab.on { color: #111; font-weight: 500; padding: 0 11px 2px; border: 1px solid #dfe3e7; border-bottom: 0; border-radius: 4px 4px 0 0; background: #fff; margin-bottom: -1px; }
.ok { width: 42px; margin-left: auto; border: 1px solid #6cb052; border-radius: 2px; padding-top: 3px; }
.save { width: 12px; margin-left: 15px; padding-top: 3px; }
.tools { display: flex; gap: 4px; padding: 7px 8px; font-size: 12px; font-weight: 500; }
.group, .pill { display: flex; align-items: center; height: 27px; border: 1px solid #e1e5ea; border-radius: 14px; background: #f8f9fb; color: #111; }
.group { overflow: hidden; }
.group button { display: flex; align-items: center; gap: 4px; height: 27px; padding: 0 8px; }
.group .off { color: #777; border-left: 1px solid #e1e5ea; }
.pill { gap: 4px; padding: 0 9px; }
.pill .caret { margin-left: -1px; }

.work { flex: 1; min-height: 0; display: flex; }
.side { display: flex; width: 412px; margin-left: 3px; background: #fff; }
.stages { flex: 1; min-width: 0; padding: 7px 6px 0; overflow: hidden; }
.thumb { width: 6px; height: calc(100% - 36px); background: #c9c9c9; }
.controls { display: flex; gap: 3px; margin-bottom: 9px; }
.controls button { height: 30px; border: 1px solid #e3e6ea; border-radius: 15px; background: #f8f9fb; color: #111; font-weight: 500; }
.controls .add { display: flex; align-items: center; justify-content: center; gap: 4px; width: 104px; margin-right: auto; background: #60a441; border-color: #60a441; color: #fff; }
.controls .add .caret { margin: 0; }
.controls .show { width: 109px; }
.controls .show .caret { margin-left: 6px; }
.controls .find { width: 32px; padding-top: 2px; }

.panel { border: 1px solid #6db5e8; border-radius: 4px; margin-bottom: 15px; overflow: hidden; }
.panel header { display: flex; align-items: center; height: 34px; padding: 0 14px 0 12px; background: #2f96dc; color: #fff; }
.panel h2 { font-size: 16px; line-height: 20px; font-weight: 700; margin-right: auto; }
.panel em { font-size: 12px; margin-right: 10px; }
.panel header button { display: flex; align-items: center; gap: 5px; font-size: 10px; font-weight: 500; font-variant: small-caps; }
.adders { display: flex; justify-content: space-between; padding: 0 41px; height: 30px; background: #e8ebef; color: #1e6b99; }
.adders button { display: flex; align-items: center; gap: 6px; }
.plus { width: 10px; height: 10px; background: linear-gradient(#1e6b99, #1e6b99) center / 10px 2px no-repeat, linear-gradient(#1e6b99, #1e6b99) center / 2px 10px no-repeat; }
table { width: 100%; border-collapse: collapse; background: #fff; }
th { height: 24px; padding: 0 8px; background: #f8f9fb; color: #777; font-size: 10px; line-height: 16px; font-weight: 400; font-variant: small-caps; text-align: left; }
th + th { text-align: right; }
td { height: 36px; padding: 0 8px; white-space: nowrap; }
td + td { padding-right: 24px; text-align: right; }
tr + tr td { border-top: 1px solid #e3e6ea; }
td svg { width: 17px; height: 17px; margin-right: 4px; vertical-align: -4px; }
td b { font-weight: 400; margin-left: 20px; }
td s { font-size: 11px; text-decoration: none; color: #666; }

.canvas { position: relative; flex: 1; min-width: 0; overflow: hidden; }
.sheet { display: block; width: calc(100% - 208px); margin-left: 80px; background: #fff; box-shadow: 0 2px 10px rgba(0, 0, 0, .3); }
.rail { position: absolute; top: 0; right: 0; width: 47px; background: #fff; color: #0c2856; border-radius: 0 0 0 6px; box-shadow: 0 4px 10px rgba(0, 0, 0, .25); overflow: hidden; }
.rail button { display: flex; align-items: center; justify-content: center; width: 100%; height: 35px; }
.rail .on { background: #1d6a98; }
.rail hr { height: 1px; margin: 0; border: 0; background: #e3e6ea; }
.rail hr.thick { height: 2px; }
.pager { position: absolute; right: 0; bottom: 0; display: flex; align-items: center; gap: 14px; height: 36px; padding: 0 15px 0 13px; background: #fff; border-radius: 6px 0 0 0; box-shadow: 0 0 6px rgba(0, 0, 0, .2); }
.pager button { display: flex; color: #3a4f80; }
```
